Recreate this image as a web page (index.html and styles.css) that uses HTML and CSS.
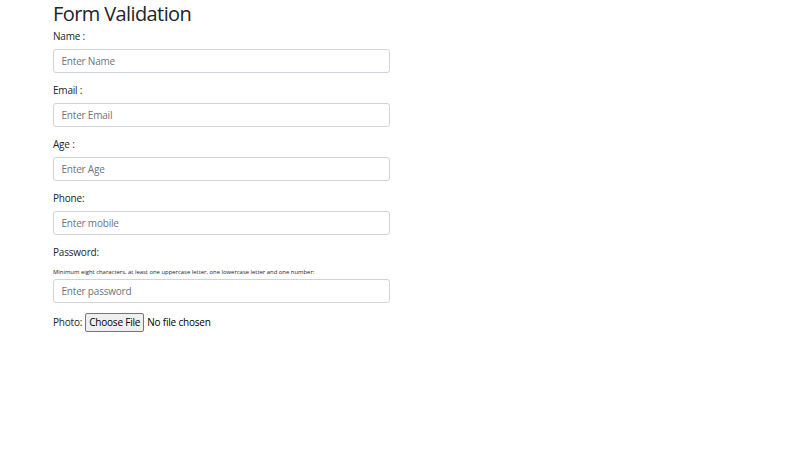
FILE: index.html
```html
<!DOCTYPE html>
<html lang="en">
<head>
<meta charset="utf-8">
<title>Form Validation</title>
<link rel="stylesheet" href="styles.css">
</head>
<body>
<div class="container">
  <div class="col">
    <h1 class="title">Form Validation</h1>
    <form class="form">
      <div class="group">
        <label class="label" for="name">Name :</label>
        <input class="control" id="name" type="text" placeholder="Enter Name">
      </div>
      <div class="group">
        <label class="label" for="email">Email :</label>
        <input class="control" id="email" type="text" placeholder="Enter Email">
      </div>
      <div class="group">
        <label class="label" for="age">Age :</label>
        <input class="control" id="age" type="text" placeholder="Enter Age">
      </div>
      <div class="group">
        <label class="label" for="phone">Phone:</label>
        <input class="control" id="phone" type="text" placeholder="Enter mobile">
      </div>
      <div class="group">
        <label class="label" for="password">Password:</label>
        <div class="hint">Minimum eight characters, at least one uppercase letter, one lowercase letter and one number:</div>
        <input class="control" id="password" type="password" placeholder="Enter password">
      </div>
      <div class="photo">
        <span class="photo-label">Photo:</span>
        <span class="file-btn">Choose File</span>
        <span class="file-text">No file chosen</span>
      </div>
    </form>
  </div>
</div>
</body>
</html>
```
FILE: styles.css
```css
html, body {
  margin: 0;
  padding: 0;
  background: #ffffff;
}
body {
  font-family: "Open Sans", "Noto Sans", sans-serif;
  color: #212529;
  font-size: 10px;
  line-height: 15px;
  letter-spacing: -0.2px;
}
.container {
  padding-left: 53px;
}
.col {
  width: 337px;
}
.title {
  font-size: 20px;
  font-weight: 400;
  line-height: 27px;
  letter-spacing: -0.6px;
  margin: 0 0 2px 0;
}
.form {
  margin: 0;
}
.group {
  display: flex;
  flex-direction: column;
  margin-bottom: 10px;
}
.label {
  display: block;
  font-size: 10px;
  line-height: 15px;
  margin-bottom: 5px;
}
.hint {
  font-size: 5.9px;
  line-height: 14px;
  letter-spacing: 0;
  color: #212529;
}
.control {
  box-sizing: border-box;
  display: block;
  width: 100%;
  height: 24px;
  padding: 0 7.5px;
  font-family: inherit;
  font-size: 10px;
  letter-spacing: -0.2px;
  color: #495057;
  background: #fff;
  border: 1px solid #ced4da;
  border-radius: 3px;
  outline: none;
}
.control::placeholder {
  color: #6c757d;
  opacity: 1;
}
.photo {
  display: flex;
  align-items: center;
  height: 19px;
}
.photo-label {
  font-size: 10px;
  margin-right: 3px;
}
.file-btn {
  box-sizing: border-box;
  height: 19px;
  line-height: 17px;
  padding: 0 3px;
  font-size: 10px;
  background: #efefef;
  border: 1px solid #767676;
  border-radius: 2px;
  color: #000;
}
.file-text {
  margin-left: 3px;
  font-size: 10px;
  color: #000;
}
```
